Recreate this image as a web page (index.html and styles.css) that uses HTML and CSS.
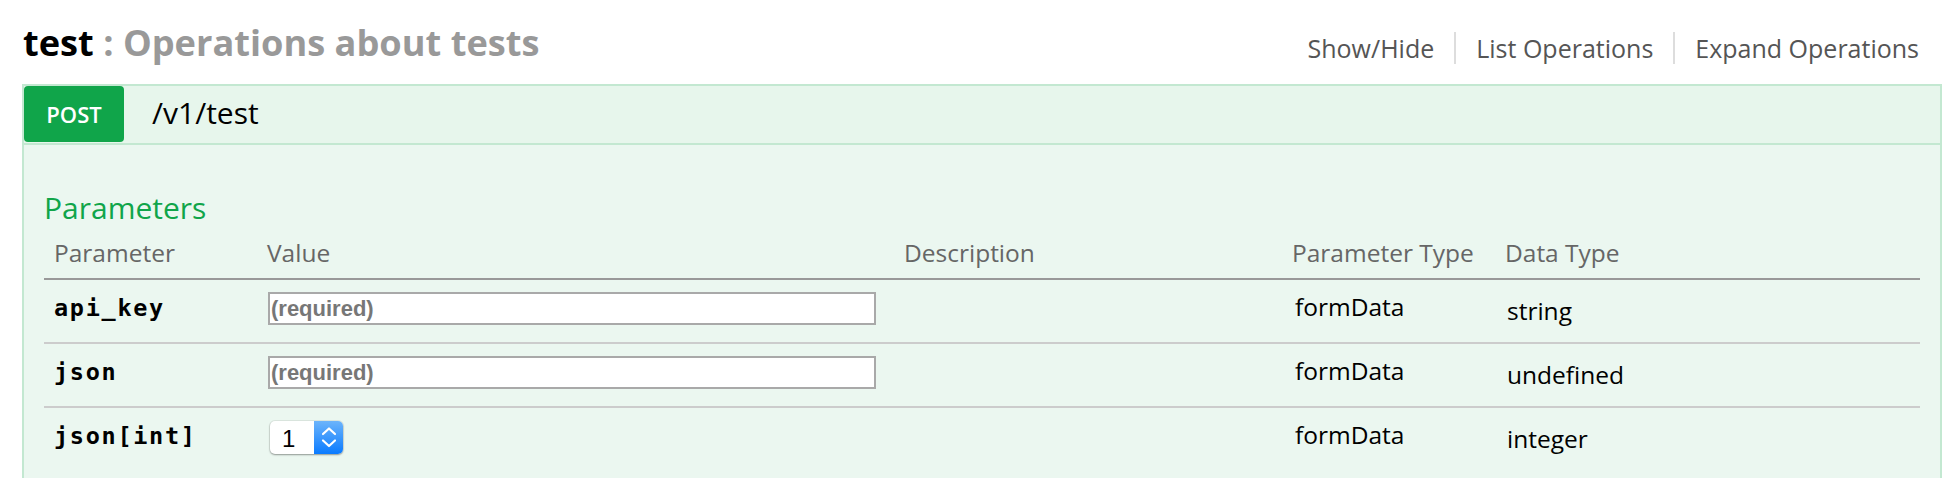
FILE: index.html
```html
<!DOCTYPE html>
<html lang="en">
<head>
<meta charset="utf-8">
<title>test : Operations about tests</title>
<link rel="stylesheet" href="styles.css">
</head>
<body>
<div class="page">
  <div class="resource-heading">
    <h2 class="res-title"><span class="res-name">test</span> : Operations about tests</h2>
    <ul class="options">
      <li>Show/Hide</li>
      <li>List Operations</li>
      <li>Expand Operations</li>
    </ul>
  </div>
  <div class="operation">
    <div class="op-heading">
      <span class="method">POST</span>
      <span class="path">/v1/test</span>
    </div>
    <div class="op-content">
      <h4 class="params-title">Parameters</h4>
      <div class="ptable">
        <div class="prow phead">
          <div class="cell">Parameter</div>
          <div class="cell">Value</div>
          <div class="cell">Description</div>
          <div class="cell">Parameter Type</div>
          <div class="cell">Data Type</div>
        </div>
        <div class="pbody">
          <div class="prow">
            <div class="cell c-name">api_key</div>
            <div class="cell c-value"><input class="text-input" type="text" placeholder="(required)"></div>
            <div class="cell c-desc"></div>
            <div class="cell c-ptype">formData</div>
            <div class="cell c-dtype">string</div>
          </div>
          <div class="prow">
            <div class="cell c-name">json</div>
            <div class="cell c-value"><input class="text-input" type="text" placeholder="(required)"></div>
            <div class="cell c-desc"></div>
            <div class="cell c-ptype">formData</div>
            <div class="cell c-dtype">undefined</div>
          </div>
          <div class="prow">
            <div class="cell c-name">json[int]</div>
            <div class="cell c-value">
              <div class="stepper">
                <span class="stepper-val">1</span>
                <span class="stepper-arrows">
                  <svg width="29" height="33" viewBox="0 0 29 33"><polyline points="9,13 15,7.5 21,13" fill="none" stroke="#fff" stroke-width="2.2" stroke-linecap="round" stroke-linejoin="round"/><polyline points="9,19.5 15,25 21,19.5" fill="none" stroke="#fff" stroke-width="2.2" stroke-linecap="round" stroke-linejoin="round"/></svg>
                </span>
              </div>
            </div>
            <div class="cell c-desc"></div>
            <div class="cell c-ptype">formData</div>
            <div class="cell c-dtype">integer</div>
          </div>
        </div>
      </div>
    </div>
  </div>
</div>
</body>
</html>
```
FILE: styles.css
```css
html, body {
  margin: 0;
  padding: 0;
  overflow: hidden;
  background: #fff;
}
body {
  font-family: "Open Sans", "Noto Sans", sans-serif;
}
.page {
  padding: 0 10px 0 22px;
}
.resource-heading {
  display: flex;
  justify-content: space-between;
  align-items: flex-start;
  height: 84px;
}
.res-title {
  margin: 22px 0 0 1px;
  font-size: 36.2px;
  line-height: 40px;
  font-weight: 700;
  color: #999;
}
.res-name {
  color: #000;
}
.options {
  list-style: none;
  margin: 32px 3px 0 0;
  padding: 0;
  display: flex;
}
.options li {
  padding: 0 20px;
  border-right: 2px solid #ddd;
  font-size: 25px;
  line-height: 32px;
  color: #555;
}
.options li:last-child {
  border-right: 0;
}
.operation {
  border: 2px solid #c3e8d1;
}
.op-heading {
  display: flex;
  align-items: flex-start;
  height: 57px;
  background: #e7f6ec;
}
.method {
  width: 100px;
  height: 56px;
  line-height: 57px;
  background: #10a54a;
  color: #fff;
  font-size: 22px;
  font-weight: 600;
  text-align: center;
  border-radius: 4px;
}
.path {
  margin-left: 28px;
  font-size: 30px;
  line-height: 53px;
  color: #000;
}
.op-content {
  border-top: 2px solid #c3e8d1;
  background: #ebf7f0;
  padding: 20px 20px 20px;
}
.params-title {
  margin: 23px 0 0;
  font-size: 30px;
  line-height: 40px;
  font-weight: 400;
  color: #10a54a;
}
.prow {
  display: grid;
  grid-template-columns: 213px 637px 388px 213px 1fr;
}
.cell {
  padding: 0 10px;
}
.phead {
  border-bottom: 2px solid #999;
  padding: 10px 0;
  font-size: 24.5px;
  line-height: 30px;
  color: #666;
}
.pbody .prow {
  height: 62px;
  font-size: 24.5px;
  line-height: 30px;
  color: #000;
}
.pbody .prow + .prow {
  border-top: 2px solid #ccc;
}
.c-name {
  padding-top: 13px;
  font-family: "DejaVu Sans Mono", monospace;
  font-weight: 700;
  font-size: 23.5px;
  letter-spacing: 1.7px;
}
.c-value {
  padding-top: 12px;
}
.c-ptype {
  padding-top: 12px;
  padding-left: 13px;
}
.c-dtype {
  padding-top: 16px;
  padding-left: 12px;
}
.text-input {
  display: block;
  box-sizing: border-box;
  width: 608px;
  height: 33px;
  margin: 0 0 0 1px;
  padding: 0 1px;
  border: 2px solid #a9a9a9;
  background: #fff;
  font-family: "Liberation Sans", Arial, sans-serif;
  font-weight: 700;
  font-size: 22px;
  color: #000;
  outline: none;
}
.text-input::placeholder {
  color: #777;
  opacity: 1;
}
.stepper {
  display: flex;
  width: 73px;
  height: 33px;
  margin: 1px 0 0 3px;
  border-radius: 5px;
  background: #fff;
  box-shadow: 0 1px 2px rgba(0, 0, 0, 0.35), 0 0 0 1px rgba(0, 0, 0, 0.06);
  overflow: hidden;
}
.stepper-val {
  flex: 1;
  padding: 1px 0 0 12px;
  font-family: "Liberation Sans", Arial, sans-serif;
  font-size: 24px;
  line-height: 33px;
  color: #000;
}
.stepper-arrows {
  width: 29px;
  height: 33px;
  background: linear-gradient(#6cb4fb, #0a7bff);
}
.stepper-arrows svg {
  display: block;
}
```
